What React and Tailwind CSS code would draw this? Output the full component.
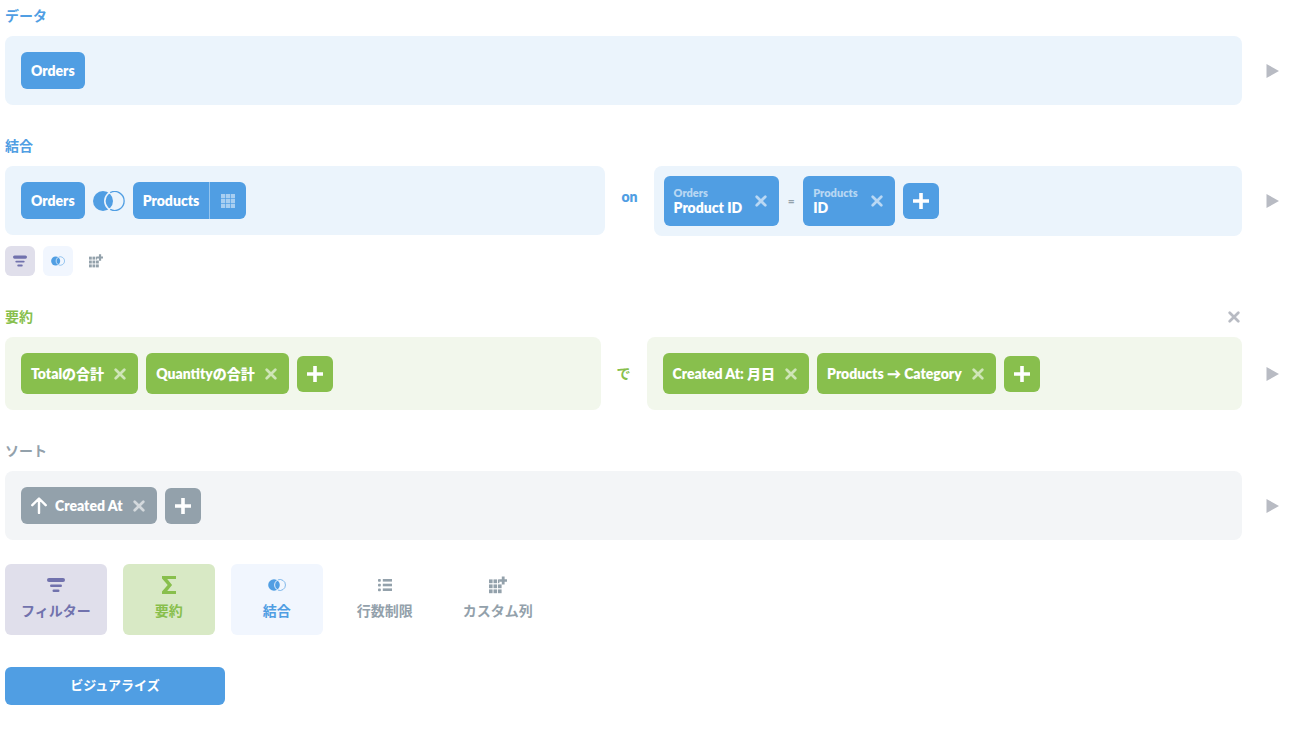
import React from 'react';

const TONES = {
  brand: { text: 'text-[#509ee3]', panel: 'bg-[#ebf4fc]', chip: 'bg-[#509ee3]' },
  green: { text: 'text-[#88bf4d]', panel: 'bg-[#f2f7ec]', chip: 'bg-[#88bf4d]' },
  gray: { text: 'text-[#93a1ab]', panel: 'bg-[#f3f5f7]', chip: 'bg-[#93a1ab]' },
};

function CloseIcon() {
  return (
    <svg width="12" height="12" viewBox="0 0 12 12" fill="none" stroke="currentColor" strokeWidth="2.7" strokeLinecap="round">
      <path d="M1.7 1.7l8.6 8.6M10.3 1.7l-8.6 8.6" />
    </svg>
  );
}

function PlusIcon() {
  return (
    <svg width="16" height="16" viewBox="0 0 16 16" fill="currentColor">
      <path d="M6.2 0h3.6v6.2H16v3.6H9.8V16H6.2V9.8H0V6.2h6.2z" />
    </svg>
  );
}

function PlayIcon() {
  return (
    <svg width="16" height="16" viewBox="0 0 16 16" fill="currentColor">
      <path d="M.5 1l12.5 7L.5 15z" />
    </svg>
  );
}

function ArrowUpIcon() {
  return (
    <svg width="16" height="17" viewBox="0 0 16 17" fill="none" stroke="currentColor" strokeWidth="2.4" strokeLinecap="round" strokeLinejoin="round">
      <path d="M8 16V1.8M1.3 8.2L8 1.5l6.7 6.7" />
    </svg>
  );
}

// left circle is filled, the right one is only an outline
function LeftJoinIcon() {
  return (
    <svg width="32" height="20" viewBox="0 0 32 20" fill="none">
      <circle cx="10" cy="10" r="10" fill="currentColor" />
      <circle cx="21.7" cy="10" r="9.9" stroke="#ebf4fc" strokeWidth="1.6" />
      <path d="M17.2 1.6A9.5 9.5 0 1 1 17.2 18.4" stroke="currentColor" strokeWidth="1.3" />
    </svg>
  );
}

function JoinIcon({ size }) {
  return (
    <svg width={size} height={size} viewBox="0 0 18 18" fill="none">
      <circle cx="6" cy="9" r="5.8" fill="currentColor" />
      <circle cx="12.2" cy="9" r="5.6" stroke="#f1f6fe" strokeWidth="0.9" />
      <path d="M9.9 3.9A5.5 5.5 0 1 1 9.9 14.1" stroke="currentColor" strokeWidth="0.7" />
    </svg>
  );
}

function GridIcon() {
  return (
    <svg width="14" height="14" viewBox="0 0 14 14" fill="currentColor">
      {[0, 5, 10].map((y) => [0, 5, 10].map((x) => (
        <rect key={`${x}-${y}`} x={x} y={y} width="4.3" height="4.3" />
      )))}
    </svg>
  );
}

function FilterIcon({ size }) {
  return (
    <svg width={size} height={size} viewBox="0 0 18 18" fill="currentColor">
      <rect x="0" y="2" width="18" height="4" rx="2" />
      <rect x="3" y="8.6" width="12" height="2.4" rx="1.2" />
      <rect x="5.5" y="13.6" width="7" height="2.4" rx="1.2" />
    </svg>
  );
}

function SumIcon() {
  return (
    <svg width="18" height="18" viewBox="0 0 18 18" fill="currentColor">
      <path d="M2 0h14v3H7.2l4.9 5.9L7.2 15H16v3H2v-2.6l5.7-6.5L2 2.6z" />
    </svg>
  );
}

function ListIcon() {
  return (
    <svg width="18" height="18" viewBox="0 0 18 18" fill="currentColor">
      {[3, 7.7, 12.4].map((y) => (
        <g key={y}>
          <rect x="2" y={y} width="2.8" height="2.8" rx="0.8" />
          <rect x="6.8" y={y} width="9.2" height="2.6" />
        </g>
      ))}
    </svg>
  );
}

function CustomColumnIcon({ size }) {
  return (
    <svg width={size} height={size} viewBox="0 0 18 18" fill="currentColor">
      {[3.4, 8.4, 13.4].map((y) => [0, 4.5, 9].map((x) => (
        <rect key={`${x}-${y}`} x={x} y={y} width={x === 9 && y < 4 ? 1.4 : 3.6} height="3.8" />
      )))}
      <path d="M12.8.4h2.8v2.8H18v2.6h-2.4v2.8h-2.8V5.8h-2.6V3.2h2.6z" />
    </svg>
  );
}

function Step({ title, tone, removable, footer, children }) {
  return (
    <section className="mb-[31px]">
      <div className="mb-[10px] mr-12 flex h-5 items-center justify-between pr-[2px]">
        <h2 className={`text-sm font-bold ${TONES[tone].text}`}>{title}</h2>
        {removable && (
          <button type="button" aria-label="削除" className="text-[#b8bbc3]">
            <CloseIcon />
          </button>
        )}
      </div>
      <div className="flex items-center">
        <div className="flex min-w-0 flex-1 items-start">{children}</div>
        <button type="button" aria-label="プレビュー" className="ml-4 p-2 text-[#b8bbc3]">
          <PlayIcon />
        </button>
      </div>
      {footer}
    </section>
  );
}

function Panel({ tone, compact, children }) {
  return (
    <div className={`flex flex-1 flex-wrap items-center gap-2 rounded-lg ${compact ? 'p-[10px]' : 'p-4'} ${TONES[tone].panel}`}>
      {children}
    </div>
  );
}

function Chip({ tone, label, table, icon, tall, removable }) {
  return (
    <div className={`flex items-center rounded-md py-[10px] pl-[10px] text-white ${removable ? 'pr-3' : 'pr-[10px]'} ${TONES[tone].chip}`}>
      {icon && <span className="mr-2">{icon}</span>}
      <button type="button" className={`block text-left text-sm font-extrabold ${tall ? 'leading-[21px]' : 'leading-[17px]'}`}>
        {table && <span className="block text-[11px] leading-[13px] text-white/60">{table}</span>}
        {label}
      </button>
      {removable && (
        <button type="button" aria-label={`${label} を削除`} className={`text-white/60 ${table ? 'ml-[13px]' : 'ml-[10px]'}`}>
          <CloseIcon />
        </button>
      )}
    </div>
  );
}

function AddButton({ tone }) {
  return (
    <button type="button" aria-label="追加" className={`rounded-md p-[10px] text-white ${TONES[tone].chip}`}>
      <PlusIcon />
    </button>
  );
}

function MiniAction({ label, className, children }) {
  return (
    <button type="button" aria-label={label} className={`flex size-[30px] items-center justify-center rounded-md ${className}`}>
      {children}
    </button>
  );
}

const ACTIONS = [
  { label: 'フィルター', className: 'bg-[#e0dfeb] text-[#7172ad]', icon: <FilterIcon size={18} /> },
  { label: '要約', className: 'bg-[#d8e9c5] text-[#88bf4d]', icon: <SumIcon /> },
  { label: '結合', className: 'bg-[#f1f6fe] text-[#509ee3]', icon: <JoinIcon size={18} /> },
  { label: '行数制限', className: 'text-[#93a1ab]', icon: <ListIcon /> },
  { label: 'カスタム列', className: 'text-[#93a1ab]', icon: <CustomColumnIcon size={18} /> },
];

export default function App() {
  return (
    <main className="min-h-screen bg-white pb-7 pl-[5px] pr-[22px] pt-[6px] font-['Lato','Noto_Sans_CJK_JP',sans-serif]">
      <Step title="データ" tone="brand">
        <Panel tone="brand">
          <Chip tone="brand" label="Orders" />
        </Panel>
      </Step>

      <Step
        title="結合"
        tone="brand"
        footer={
          <div className="mt-[10px] flex gap-2">
            <MiniAction label="フィルター" className="bg-[#e0dfeb] text-[#7172ad]">
              <FilterIcon size={14} />
            </MiniAction>
            <MiniAction label="結合" className="bg-[#f1f6fe] text-[#509ee3]">
              <JoinIcon size={14} />
            </MiniAction>
            <MiniAction label="カスタム列" className="text-[#93a1ab]">
              <CustomColumnIcon size={14} />
            </MiniAction>
          </div>
        }
      >
        <Panel tone="brand">
          <Chip tone="brand" label="Orders" />
          <button type="button" aria-label="結合の種類" className="text-[#509ee3]">
            <LeftJoinIcon />
          </button>
          <div className="flex items-stretch rounded-md bg-[#509ee3] text-white">
            <button type="button" className="p-[10px] text-sm font-extrabold leading-[17px]">Products</button>
            <button type="button" aria-label="列を選択" className="border-l border-white/40 px-[11px] text-white/50">
              <GridIcon />
            </button>
          </div>
        </Panel>
        <span className="mx-4 self-center pb-2 text-sm font-extrabold text-[#509ee3]">on</span>
        <Panel tone="brand" compact>
          <Chip tone="brand" table="Orders" label="Product ID" removable />
          <span className="w-2 text-center text-xs font-bold text-[#93a1ab]">=</span>
          <Chip tone="brand" table="Products" label="ID" removable />
          <AddButton tone="brand" />
        </Panel>
      </Step>

      <Step title="要約" tone="green" removable>
        <Panel tone="green">
          <Chip tone="green" label="Totalの合計" tall removable />
          <Chip tone="green" label="Quantityの合計" tall removable />
          <AddButton tone="green" />
        </Panel>
        <span className="mx-4 self-center text-sm font-bold text-[#88bf4d]">で</span>
        <Panel tone="green">
          <Chip tone="green" label="Created At: 月日" tall removable />
          <Chip tone="green" label="Products → Category" tall removable />
          <AddButton tone="green" />
        </Panel>
      </Step>

      <Step title="ソート" tone="gray">
        <Panel tone="gray">
          <Chip tone="gray" label="Created At" icon={<ArrowUpIcon />} removable />
          <AddButton tone="gray" />
        </Panel>
      </Step>

      <div className="-mt-[7px] flex flex-wrap gap-4">
        {ACTIONS.map((action) => (
          <button
            key={action.label}
            type="button"
            className={`flex min-w-[92px] flex-col items-center gap-[6px] rounded-md px-4 pb-[14px] pt-3 text-sm font-bold leading-[21px] ${action.className}`}
          >
            {action.icon}
            {action.label}
          </button>
        ))}
      </div>

      <button type="button" className="mt-8 block w-[220px] rounded-md bg-[#509ee3] pb-[10px] pt-2 text-[13px] font-bold leading-5 text-white">
        ビジュアライズ
      </button>
    </main>
  );
}
